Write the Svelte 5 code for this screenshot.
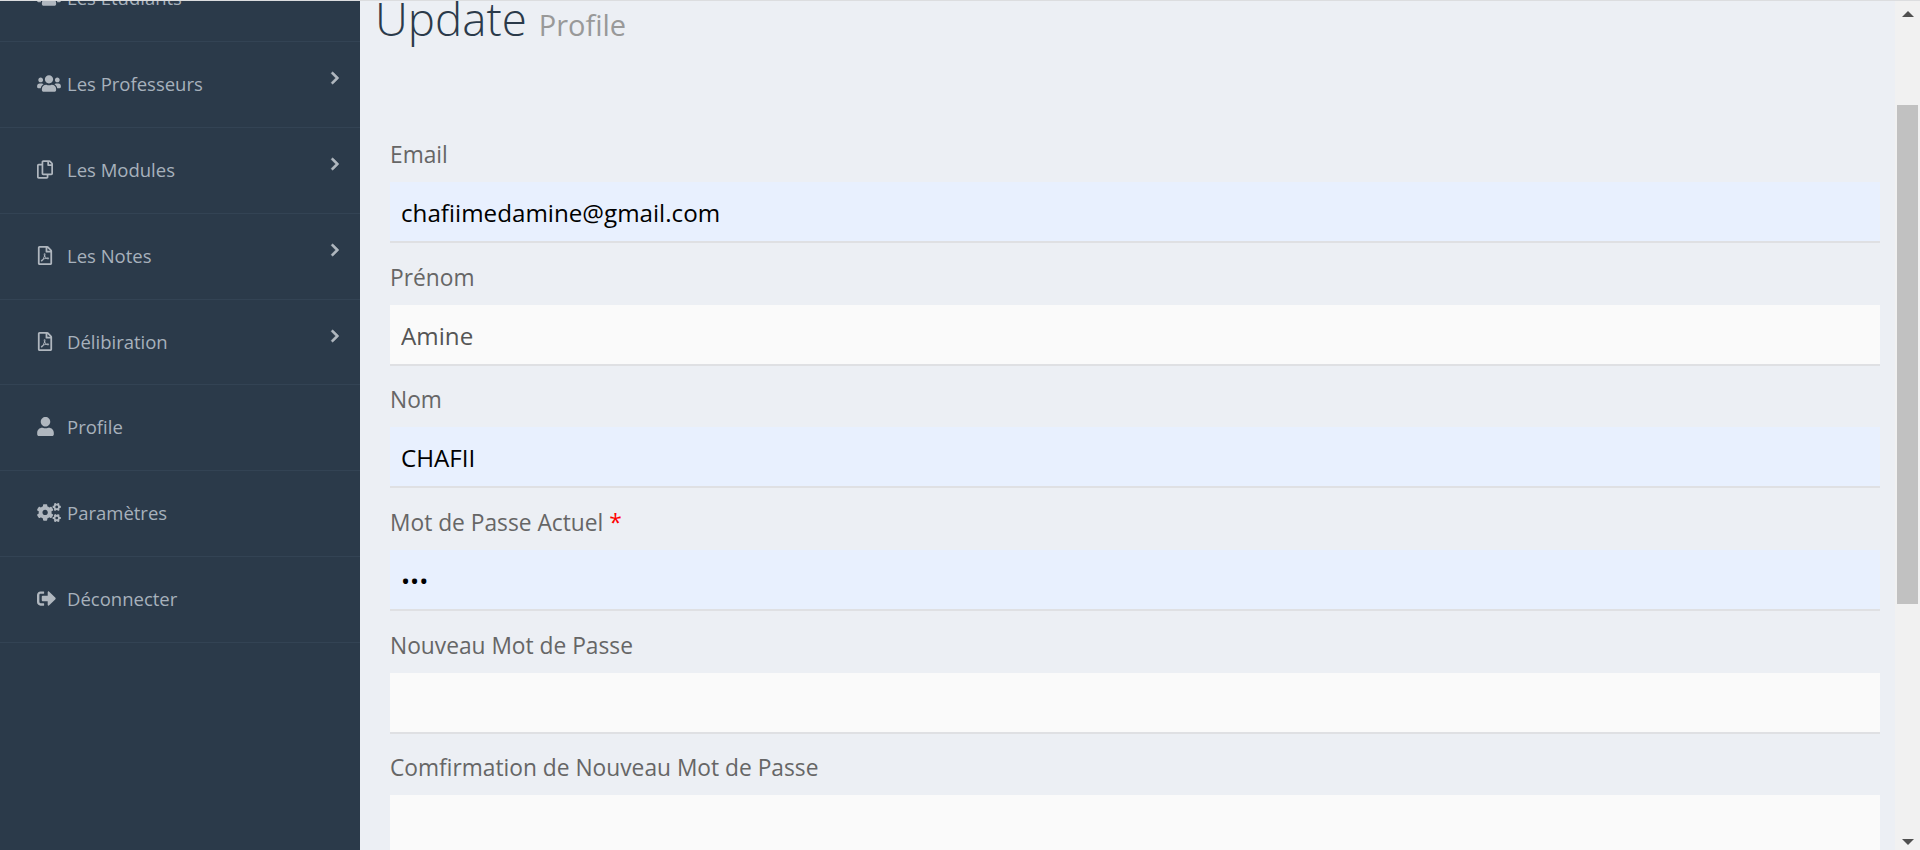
<script>
    const icons = {
        users: { box: "0 0 640 512", d: "M96 224c35.3 0 64-28.7 64-64s-28.7-64-64-64-64 28.7-64 64 28.7 64 64 64zm448 0c35.3 0 64-28.7 64-64s-28.7-64-64-64-64 28.7-64 64 28.7 64 64 64zm32 32h-64c-17.6 0-33.5 7.1-45.1 18.6 40.3 22.1 68.9 62 75.1 109.4h66c17.7 0 32-14.3 32-32v-32c0-35.3-28.7-64-64-64zm-256 0c61.9 0 112-50.1 112-112S381.9 32 320 32 208 82.1 208 144s50.1 112 112 112zm76.8 32h-8.3c-20.8 10-43.9 16-68.5 16s-47.6-6-68.5-16h-8.3C179.6 288 128 339.6 128 403.2V432c0 26.5 21.5 48 48 48h288c26.5 0 48-21.5 48-48v-28.8c0-63.6-51.6-115.2-115.2-115.2zm-223.7-13.4C161.5 263.1 145.6 256 128 256H64c-35.3 0-64 28.7-64 64v32c0 17.7 14.3 32 32 32h65.9c6.3-47.4 34.9-87.3 75.2-109.4z" },
        copy: { box: "0 0 448 512", d: "M433.941 65.941l-51.882-51.882A48 48 0 0 0 348.118 0H176c-26.51 0-48 21.49-48 48v48H48c-26.51 0-48 21.49-48 48v320c0 26.51 21.49 48 48 48h224c26.51 0 48-21.49 48-48v-48h80c26.51 0 48-21.49 48-48V99.882a48 48 0 0 0-14.059-33.941zM266 464H54a6 6 0 0 1-6-6V150a6 6 0 0 1 6-6h74v224c0 26.51 21.49 48 48 48h96v42a6 6 0 0 1-6 6zm128-96H182a6 6 0 0 1-6-6V54a6 6 0 0 1 6-6h106v88c0 13.255 10.745 24 24 24h88v202a6 6 0 0 1-6 6zm6-256h-64V48h9.632c1.591 0 3.117.632 4.243 1.757l48.368 48.368a6 6 0 0 1 1.757 4.243V112z" },
        pdf: { box: "0 0 384 512", d: "M369.9 97.9L286 14C277 5 264.8-.1 252.1-.1H48C21.5 0 0 21.5 0 48v416c0 26.5 21.5 48 48 48h288c26.5 0 48-21.5 48-48V131.9c0-12.7-5.1-25-14.1-34zM332.1 128H256V51.9l76.1 76.1zM48 464V48h160v104c0 13.3 10.7 24 24 24h104v288H48zm250.2-143.7c-12.2-12-47-8.7-64.4-6.5-17.2-10.5-28.7-25-36.8-46.3 3.9-16.1 10.1-40.6 5.4-56-4.2-26.2-37.8-23.6-42.6-5.9-4.4 16.1-.4 38.5 7 67.1-10 23.9-24.9 56-35.4 74.4-20 10.3-47 26.2-51 46.2-3.3 15.8 26 55.2 76.1-31.2 22.4-7.4 46.8-16.5 68.4-20.1 18.9 10.2 41 17 55.8 17 25.5 0 28-28.2 17.5-38.7zm-198.1 77.8c5.1-13.7 24.5-29.5 30.4-35-19 30.3-30.4 35.7-30.4 35zm81.6-190.6c7.4 0 6.7 32.1 1.8 40.8-4.4-13.9-4.3-40.8-1.8-40.8zm-24.4 136.6c9.7-16.9 18-37 24.7-54.7 8.3 15.1 18.9 27.2 30.1 35.5-20.8 4.3-38.9 13.1-54.8 19.2zm131.6-5s-5 6-37.3-7.8c35.1-2.6 40.9 5.4 37.3 7.8z" },
        user: { box: "0 0 448 512", d: "M224 256c70.7 0 128-57.3 128-128S294.7 0 224 0 96 57.3 96 128s57.3 128 128 128zm89.6 32h-16.7c-22.2 10.2-46.9 16-72.9 16s-50.6-5.8-72.9-16h-16.7C60.2 288 0 348.2 0 422.4V464c0 26.5 21.5 48 48 48h352c26.5 0 48-21.5 48-48v-41.6c0-74.2-60.2-134.4-134.4-134.4z" },
        cogs: { box: "0 0 640 512", d: "M512.1 191l-8.2 14.3c-3 5.3-9.4 7.5-15.1 5.4-11.8-4.4-22.6-10.7-32.1-18.6-4.6-3.8-5.8-10.5-2.8-15.7l8.2-14.3c-6.9-8-12.3-17.3-15.9-27.4h-16.5c-6 0-11.2-4.3-12.2-10.3-2-12-2.1-24.6 0-37.1 1-6 6.2-10.4 12.2-10.4h16.5c3.6-10.1 9-19.4 15.9-27.4l-8.2-14.3c-3-5.2-1.9-11.9 2.8-15.7 9.5-7.9 20.4-14.2 32.1-18.6 5.7-2.1 12.1.1 15.1 5.4l8.2 14.3c10.5-1.9 21.2-1.9 31.7 0L552 6.3c3-5.3 9.4-7.5 15.1-5.4 11.8 4.4 22.6 10.7 32.1 18.6 4.6 3.8 5.8 10.5 2.8 15.7l-8.2 14.3c6.9 8 12.3 17.3 15.9 27.4h16.5c6 0 11.2 4.3 12.2 10.3 2 12 2.1 24.6 0 37.1-1 6-6.2 10.4-12.2 10.4h-16.5c-3.6 10.1-9 19.4-15.9 27.4l8.2 14.3c3 5.2 1.9 11.9-2.8 15.7-9.5 7.9-20.4 14.2-32.1 18.6-5.7 2.1-12.1-.1-15.1-5.4l-8.2-14.3c-10.4 1.9-21.2 1.9-31.7 0zm-10.5-58.8c38.5 29.6 82.4-14.3 52.8-52.8-38.5-29.7-82.4 14.3-52.8 52.8zM386.3 286.1l33.7 16.8c10.1 5.8 14.5 18.1 10.5 29.1-8.9 24.2-26.4 46.4-42.6 65.8-7.4 8.9-20.2 11.1-30.3 5.3l-29.1-16.8c-16 13.7-34.6 24.6-54.9 31.7v33.6c0 11.6-8.3 21.6-19.7 23.6-24.6 4.2-50.4 4.4-75.9 0-11.5-2-20-11.9-20-23.6V418c-20.3-7.2-38.9-18-54.9-31.7L74 403c-10 5.8-22.9 3.6-30.3-5.3-16.2-19.4-33.3-41.6-42.2-65.7-4-10.9.4-23.2 10.5-29.1l33.3-16.8c-3.9-20.9-3.9-42.4 0-63.4L12 205.8c-10.1-5.8-14.6-18.1-10.5-29 8.9-24.2 26-46.4 42.2-65.8 7.4-8.9 20.2-11.1 30.3-5.3l29.1 16.8c16-13.7 34.6-24.6 54.9-31.7V57.1c0-11.5 8.2-21.5 19.6-23.5 24.6-4.2 50.5-4.4 76-.1 11.5 2 20 11.9 20 23.6v33.6c20.3 7.2 38.9 18 54.9 31.7l29.1-16.8c10-5.8 22.9-3.6 30.3 5.3 16.2 19.4 33.2 41.6 42.1 65.8 4 10.9.1 23.2-10 29.1l-33.7 16.8c3.9 21 3.9 42.5 0 63.5zm-117.6 21.1c59.2-77-28.7-164.9-105.7-105.7-59.2 77 28.7 164.9 105.7 105.7zm243.4 182.7l-8.2 14.3c-3 5.3-9.4 7.5-15.1 5.4-11.8-4.4-22.6-10.7-32.1-18.6-4.6-3.8-5.8-10.5-2.8-15.7l8.2-14.3c-6.9-8-12.3-17.3-15.9-27.4h-16.5c-6 0-11.2-4.3-12.2-10.3-2-12-2.1-24.6 0-37.1 1-6 6.2-10.4 12.2-10.4h16.5c3.6-10.1 9-19.4 15.9-27.4l-8.2-14.3c-3-5.2-1.9-11.9 2.8-15.7 9.5-7.9 20.4-14.2 32.1-18.6 5.7-2.1 12.1.1 15.1 5.4l8.2 14.3c10.5-1.9 21.2-1.9 31.7 0l8.2-14.3c3-5.3 9.4-7.5 15.1-5.4 11.8 4.4 22.6 10.7 32.1 18.6 4.6 3.8 5.8 10.5 2.8 15.7l-8.2 14.3c6.9 8 12.3 17.3 15.9 27.4h16.5c6 0 11.2 4.3 12.2 10.3 2 12 2.1 24.6 0 37.1-1 6-6.2 10.4-12.2 10.4h-16.5c-3.6 10.1-9 19.4-15.9 27.4l8.2 14.3c3 5.2 1.9 11.9-2.8 15.7-9.5 7.9-20.4 14.2-32.1 18.6-5.7 2.1-12.1-.1-15.1-5.4l-8.2-14.3c-10.4 1.9-21.2 1.9-31.7 0zM501.6 431c38.5 29.6 82.4-14.3 52.8-52.8-38.5-29.6-82.4 14.3-52.8 52.8z" },
        signOut: { box: "0 0 512 512", d: "M497 273L329 441c-15 15-41 4.5-41-17v-96H152c-13.3 0-24-10.7-24-24v-96c0-13.3 10.7-24 24-24h136V88c0-21.4 25.9-32 41-17l168 168c9.3 9.4 9.3 24.6 0 34zM192 436v-40c0-6.6-5.4-12-12-12H96c-17.7 0-32-14.3-32-32V160c0-17.7 14.3-32 32-32h84c6.6 0 12-5.4 12-12V76c0-6.6-5.4-12-12-12H96c-53 0-96 43-96 96v192c0 53 43 96 96 96h84c6.6 0 12-5.4 12-12z" },
    };

    const menu = [
        { label: "Les Etudiants", icon: "users", arrow: false },
        { label: "Les Professeurs", icon: "users", arrow: true },
        { label: "Les Modules", icon: "copy", arrow: true },
        { label: "Les Notes", icon: "pdf", arrow: true },
        { label: "Délibiration", icon: "pdf", arrow: true },
        { label: "Profile", icon: "user", arrow: false },
        { label: "Paramètres", icon: "cogs", arrow: false },
        { label: "Déconnecter", icon: "signOut", arrow: false },
    ];

    const fields = [
        { label: "Email", type: "email", value: "chafiimedamine@gmail.com", filled: true },
        { label: "Prénom", type: "text", value: "Amine", filled: false },
        { label: "Nom", type: "text", value: "CHAFII", filled: true },
        { label: "Mot de Passe Actuel", type: "password", value: "abc", filled: true, required: true },
        { label: "Nouveau Mot de Passe", type: "password", value: "", filled: false },
        { label: "Comfirmation de Nouveau Mot de Passe", type: "password", value: "", filled: false },
    ];
</script>

<div class="page">
    <aside class="sidebar">
        <ul>
            {#each menu as item}
                <li>
                    <svg class="icon" viewBox={icons[item.icon].box} aria-hidden="true">
                        <path d={icons[item.icon].d} />
                    </svg>
                    <span class="text">{item.label}</span>
                    {#if item.arrow}
                        <svg class="chevron" viewBox="0 0 320 512" aria-hidden="true">
                            <path d="M285.476 272.971L91.132 467.314c-9.373 9.373-24.569 9.373-33.941 0l-22.667-22.667c-9.357-9.357-9.375-24.522-.04-33.901L188.505 256 34.484 101.255c-9.335-9.379-9.317-24.544.04-33.901l22.667-22.667c9.373-9.373 24.569-9.373 33.941 0L285.475 239.03c9.373 9.372 9.373 24.568.001 33.941z" />
                        </svg>
                    {/if}
                </li>
            {/each}
        </ul>
    </aside>

    <main class="content">
        <h1>Update <small>Profile</small></h1>
        <form>
            {#each fields as field}
                <div class="field">
                    <label>
                        <span class="label-text">
                            {field.label}
                            {#if field.required}<span class="required">*</span>{/if}
                        </span>
                        <input class:filled={field.filled} type={field.type} value={field.value} />
                    </label>
                </div>
            {/each}
        </form>
    </main>

    <div class="scrollbar" aria-hidden="true">
        <div class="arrow up"></div>
        <div class="track"><div class="thumb"></div></div>
        <div class="arrow down"></div>
    </div>
</div>

<style>
    :global(body) {
        margin: 0;
        overflow: hidden;
    }

    .page {
        display: flex;
        height: 849px;
        border-top: 1px solid #dcdddf;
        overflow: hidden;
        font-family: "Open Sans", "Noto Sans", sans-serif;
        background-color: #eceff4;
    }

    .sidebar {
        width: 360px;
        flex: none;
        background-color: #2b3a4a;
        overflow: hidden;
    }

    .sidebar ul {
        list-style: none;
        margin: -45px 0 0;
        padding: 0;
    }

    .sidebar li {
        display: flex;
        align-items: center;
        box-sizing: border-box;
        height: 85.9px;
        padding: 0 20px 2px 37px;
        border-bottom: 1px solid #334354;
        color: #a7b1bc;
        font-size: 18.5px;
    }

    .icon {
        width: 24px;
        height: 19px;
        flex: none;
        fill: #b0b7bf;
        display: block;
        margin-right: 6px;
    }

    .sidebar li:nth-child(n + 3):nth-child(-n + 5) .icon {
        width: 16px;
        margin-right: 14px;
    }

    .sidebar li:nth-child(3) .icon {
        width: 17px;
        margin-right: 13px;
    }

    .sidebar li:nth-child(6) .icon {
        width: 17px;
        margin-right: 13px;
    }

    .sidebar li:nth-child(8) .icon {
        width: 19px;
        margin-right: 11px;
    }

    .text {
        flex: 1;
    }

    .chevron {
        width: 10px;
        height: 14px;
        fill: #b0b7bf;
        stroke: #b0b7bf;
        stroke-width: 24px;
        margin-bottom: 10px;
    }

    .content {
        flex: 1;
        min-width: 0;
        overflow: hidden;
        padding: 0 15px 0 15px;
    }

    h1 {
        margin: -14px 0 0 0;
        color: #2b3a4a;
        font-size: 45.7px;
        font-weight: 300;
        line-height: 62px;
        white-space: nowrap;
    }

    h1 small {
        margin-left: 0;
        color: #999;
        font-size: 29px;
        font-weight: 400;
    }

    form {
        margin-top: 83px;
        padding: 0 0 0 15px;
    }

    .field {
        margin-bottom: 18.7px;
    }

    label {
        display: block;
        color: #666;
        font-size: 22.75px;
        line-height: 31px;
    }

    .label-text {
        display: block;
        margin-bottom: 12px;
    }

    .required {
        color: #f00;
    }

    input {
        display: block;
        box-sizing: border-box;
        width: 100%;
        height: 61px;
        padding: 2px 11px 0;
        border: 0;
        border-bottom: 2px solid #dfe0e3;
        border-radius: 0;
        outline: 0;
        background-color: #fafafa;
        color: #555;
        font-family: inherit;
        font-size: 24.2px;
    }

    input.filled {
        background-color: #e8f0fe;
        color: #000;
    }

    .scrollbar {
        width: 25px;
        flex: none;
        display: flex;
        flex-direction: column;
        background-color: #f1f1f1;
        box-sizing: border-box;
        padding: 10px 0 5px;
    }

    .arrow {
        align-self: center;
        width: 0;
        height: 0;
        border-left: 6px solid transparent;
        border-right: 6px solid transparent;
        flex: none;
    }

    .arrow.up {
        border-bottom: 6px solid #505050;
    }

    .arrow.down {
        border-top: 6px solid #505050;
    }

    .track {
        flex: 1;
        padding: 88px 2px 0;
    }

    .thumb {
        height: 499px;
        background-color: #c1c1c1;
    }
</style>
